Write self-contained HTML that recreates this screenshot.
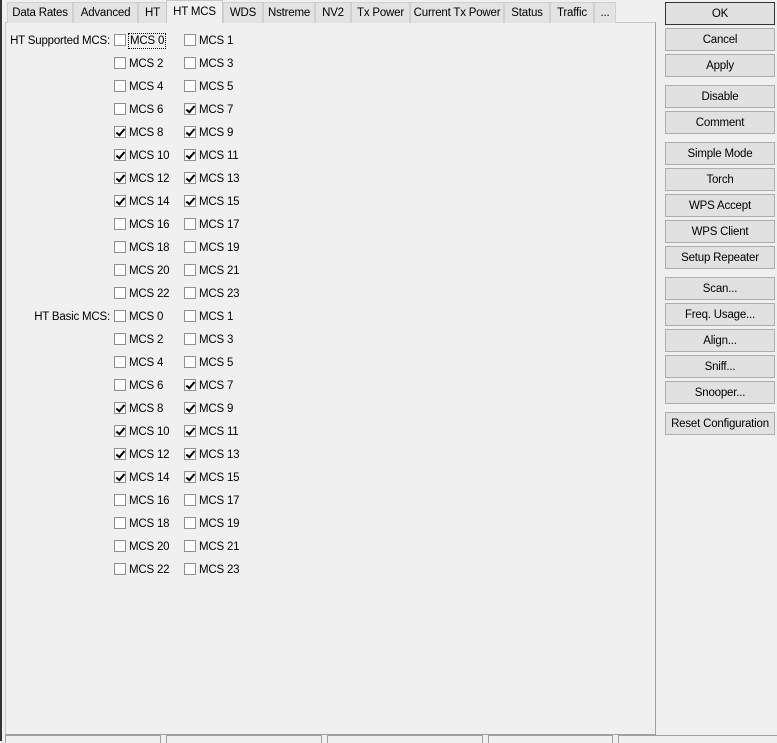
<!DOCTYPE html>
<html><head><style>
*{margin:0;padding:0;box-sizing:border-box}
body{width:777px;height:741px;background:#f0f0f0;font-family:"Liberation Sans",sans-serif;font-size:11.5px;color:#000;position:relative;overflow:hidden;white-space:nowrap}
.a{position:absolute}
.tab{position:absolute;top:2px;height:21px;background:#e3e3e3;border:1px solid #d0d0d0;border-bottom:none;text-align:center;line-height:20px;font-size:11.5px;letter-spacing:-0.2px}
.sel{top:0;height:23px;background:#f0f0f0;border-color:#c8c8c8;line-height:23px;z-index:2}
.panel{position:absolute;left:5px;top:22px;width:651px;height:713px;border:1px solid #c8c8c8;border-right-color:#a0a0a0;border-bottom-color:#a0a0a0;background:#f0f0f0}
.btn{position:absolute;left:665px;width:110px;height:23px;background:#e1e1e1;border:1px solid #adadad;text-align:center;line-height:22px;font-size:11.5px;letter-spacing:-0.2px}
.cb{position:absolute;width:12px;height:12px;border:1px solid #8f8f8f;background:#fff}
.cb.c::after{content:"";position:absolute;left:3px;top:0px;width:3px;height:7px;border:solid #000;border-width:0 2px 2px 0;transform:rotate(40deg)}
.lb{position:absolute;font-size:11.5px;line-height:14px;letter-spacing:-0.2px}
.st{position:absolute;top:735px;height:8px;border:1px solid #a0a0a0;border-bottom:none;background:#f0f0f0}
</style></head><body>
<div class="a" style="left:0;top:0;width:2px;height:741px;background:#333"></div>
<div class="panel"></div>
<div class="tab" style="left:7px;width:66px">Data Rates</div>
<div class="tab" style="left:73px;width:65px">Advanced</div>
<div class="tab" style="left:138px;width:29px">HT</div>
<div class="tab sel" style="left:166px;width:57px">HT MCS</div>
<div class="tab" style="left:223px;width:40px">WDS</div>
<div class="tab" style="left:263px;width:52px">Nstreme</div>
<div class="tab" style="left:315px;width:36px">NV2</div>
<div class="tab" style="left:351px;width:59px">Tx Power</div>
<div class="tab" style="left:410px;width:94px">Current Tx Power</div>
<div class="tab" style="left:504px;width:46px">Status</div>
<div class="tab" style="left:550px;width:44px">Traffic</div>
<div class="tab" style="left:594px;width:22px">...</div>

<div class="btn" style="top:2px;border-color:#333">OK</div>
<div class="btn" style="top:28px">Cancel</div>
<div class="btn" style="top:54px">Apply</div>
<div class="btn" style="top:85px">Disable</div>
<div class="btn" style="top:111px">Comment</div>
<div class="btn" style="top:142px">Simple Mode</div>
<div class="btn" style="top:168px">Torch</div>
<div class="btn" style="top:194px">WPS Accept</div>
<div class="btn" style="top:220px">WPS Client</div>
<div class="btn" style="top:246px">Setup Repeater</div>
<div class="btn" style="top:277px">Scan...</div>
<div class="btn" style="top:303px">Freq. Usage...</div>
<div class="btn" style="top:329px">Align...</div>
<div class="btn" style="top:355px">Sniff...</div>
<div class="btn" style="top:381px">Snooper...</div>
<div class="btn" style="top:412px">Reset Configuration</div>

<div id="g"></div>
<div class="st" style="left:5px;width:156px"></div>
<div class="st" style="left:166px;width:156px"></div>
<div class="st" style="left:327px;width:156px"></div>
<div class="st" style="left:488px;width:125px"></div>
<div class="st" style="left:618px;width:160px"></div>
<script>
var h='';
function blk(y0,label){
 h+='<div class="lb" style="right:667px;top:'+(y0-6)+'px">'+label+'</div>';
 for(var r=0;r<12;r++){
  var y=y0+r*23;
  for(var c=0;c<2;c++){
   var n=r*2+c, x=c?184:114;
   var chk=(n>=7&&n<=15)?' c':'';
   h+='<div class="cb'+chk+'" style="left:'+x+'px;top:'+(y-6)+'px"></div>';
   var st=(n==0&&label.indexOf('Supported')>=0)?'outline:1px dotted #000;outline-offset:0;padding:0 1px;':'';
   h+='<div class="lb" style="left:'+(x+15)+'px;top:'+(y-6)+'px;'+st+'">MCS '+n+'</div>';
  }
 }
}
blk(40,'HT Supported MCS:');
blk(316,'HT Basic MCS:');
document.getElementById('g').innerHTML=h;
</script>
</body></html>
